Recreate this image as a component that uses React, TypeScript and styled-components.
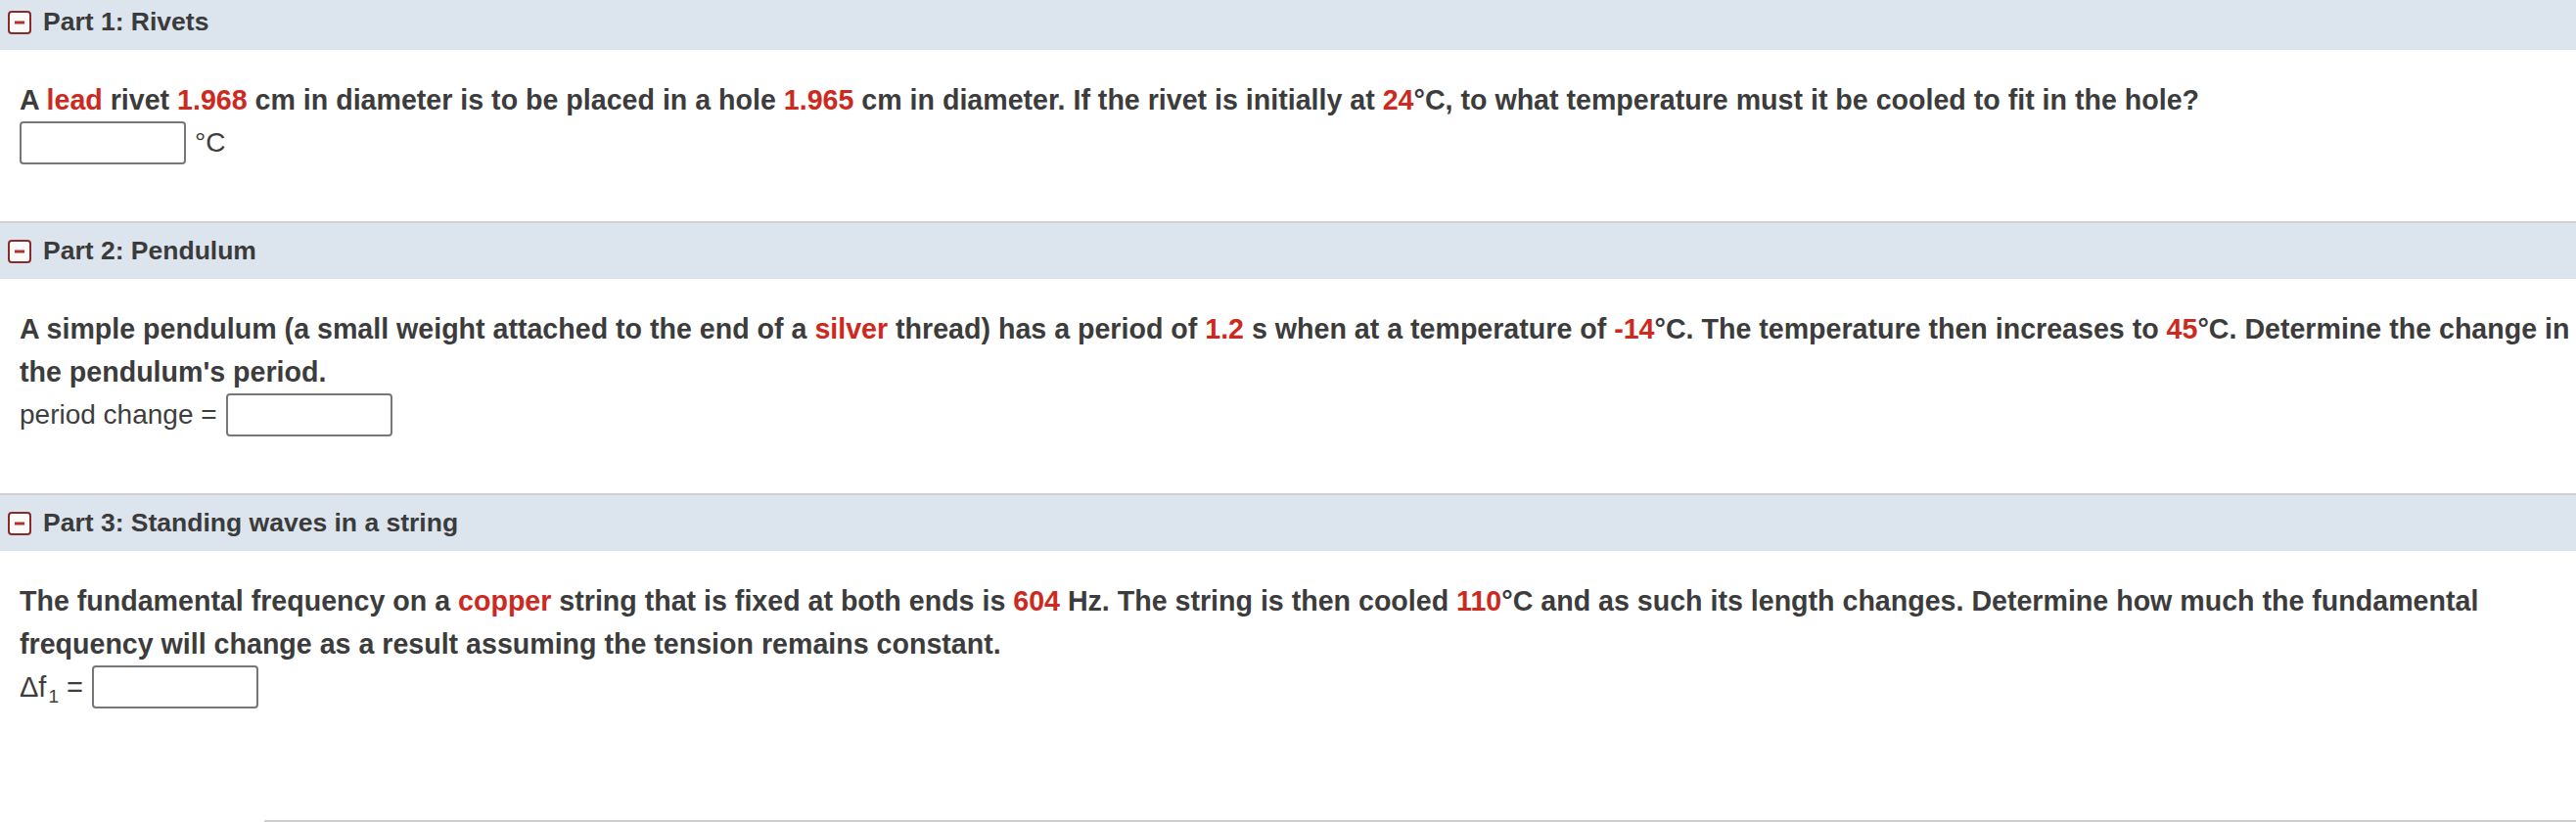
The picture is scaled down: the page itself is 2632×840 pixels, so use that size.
import React from "react";
import styled, { createGlobalStyle } from "styled-components";

const GlobalStyle = createGlobalStyle`
  html, body {
    margin: 0;
    padding: 0;
    background: #fff;
  }
  body {
    font-family: "Liberation Sans", Arial, Helvetica, sans-serif;
    color: #3c3c3c;
    overflow: hidden;
  }
`;

const Page = styled.div`
  width: 2632px;
  margin-top: -6px;
`;

const Section = styled.section<{ $first?: boolean }>`
  border-top: ${(p) => (p.$first ? "none" : "2px solid #d0d0d0")};
`;

const PartHeader = styled.div`
  height: 57px;
  display: flex;
  align-items: center;
  gap: 12px;
  padding-left: 8px;
  background: #dce5ee;
  font-size: 26.5px;
  font-weight: bold;
  color: #3b3b3b;
`;

const Body = styled.div`
  padding: 29px 4px 58px 20px;
`;

const Question = styled.p`
  margin: 0;
  font-size: 28.6px;
  line-height: 44px;
  font-weight: bold;
  color: #3c3c3c;
`;

const Hl = styled.span`
  color: #cc2a21;
`;

const AnswerRow = styled.div`
  display: flex;
  align-items: center;
  gap: 9px;
  height: 44px;
  font-size: 28px;
  color: #3e3e3e;
`;

const AnswerInput = styled.input`
  box-sizing: border-box;
  width: 170px;
  height: 44px;
  margin: 0;
  padding: 0 8px;
  border: 2px solid #777;
  border-radius: 4px;
  background: #fff;
  font: inherit;
`;

const Symbol = styled.span`
  font-size: 29px;
`;

const Sub = styled.sub`
  font-size: 19px;
  line-height: 0;
  vertical-align: -6px;
  margin-left: 2px;
`;

const Footer = styled.div`
  margin: 56px 0 0 270px;
  border-top: 2px solid #cfcfcf;
`;

const CollapseIcon = () => (
  <svg width="24" height="24" viewBox="0 0 24 24" aria-hidden="true">
    <rect x="1" y="1" width="22" height="22" rx="3" fill="#fdfafa" stroke="#8a2a2a" strokeWidth="2" />
    <line x1="7" y1="12" x2="17" y2="12" stroke="#b3302c" strokeWidth="3" />
  </svg>
);

const Part = ({ title, first, children }: { title: string; first?: boolean; children: React.ReactNode }) => (
  <Section $first={first}>
    <PartHeader>
      <CollapseIcon />
      <span>{title}</span>
    </PartHeader>
    <Body>{children}</Body>
  </Section>
);

const App = () => (
  <>
    <GlobalStyle />
    <Page>
      <Part title="Part 1: Rivets" first>
        <Question>
          A <Hl>lead</Hl> rivet <Hl>1.968</Hl> cm in diameter is to be placed in a hole <Hl>1.965</Hl> cm in
          diameter. If the rivet is initially at <Hl>24</Hl>°C, to what temperature must it be cooled to fit in the hole?
        </Question>
        <AnswerRow>
          <AnswerInput type="text" />
          <span>°C</span>
        </AnswerRow>
      </Part>

      <Part title="Part 2: Pendulum">
        <Question>
          A simple pendulum (a small weight attached to the end of a <Hl>silver</Hl> thread) has a period of{" "}
          <Hl>1.2</Hl> s when at a temperature of <Hl>-14</Hl>°C. The temperature then increases to <Hl>45</Hl>°C.
          Determine the change in the pendulum's period.
        </Question>
        <AnswerRow>
          <span>period change =</span>
          <AnswerInput type="text" />
        </AnswerRow>
      </Part>

      <Part title="Part 3: Standing waves in a string">
        <Question>
          The fundamental frequency on a <Hl>copper</Hl> string that is fixed at both ends is <Hl>604</Hl> Hz. The
          string is then cooled <Hl>110</Hl>°C and as such its length changes. Determine how much the fundamental
          frequency will change as a result assuming the tension remains constant.
        </Question>
        <AnswerRow>
          <Symbol>
            Δf<Sub>1</Sub> =
          </Symbol>
          <AnswerInput type="text" />
        </AnswerRow>
      </Part>
      <Footer />
    </Page>
  </>
);

export default App;
